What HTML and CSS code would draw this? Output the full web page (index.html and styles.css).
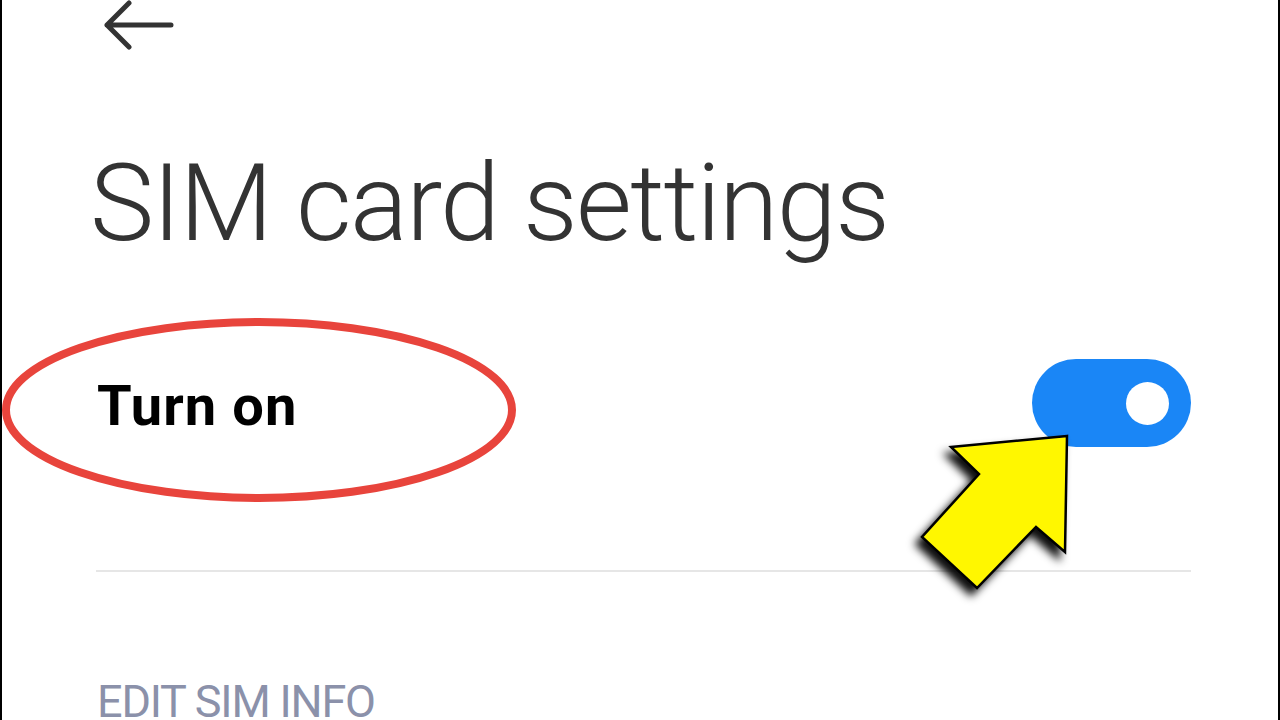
FILE: index.html
```html
<!DOCTYPE html>
<html>
<head>
<meta charset="utf-8">
<link rel="stylesheet" href="styles.css">
</head>
<body>
<div class="screen">
  <div class="page">
    <header class="topbar">
      <svg class="back" width="72" height="50" viewBox="0 0 72 50">
        <path d="M3 25 H67 M3 25 L25 3 M3 25 L25 47" fill="none" stroke="#333" stroke-width="5" stroke-linecap="round" stroke-linejoin="round"/>
      </svg>
    </header>
    <h1 class="title">SIM card settings</h1>
    <div class="row">
      <span class="label">Turn on</span>
      <div class="toggle"><span class="knob"></span></div>
    </div>
    <div class="divider"></div>
    <div class="section">EDIT SIM INFO</div>
  </div>
  <svg class="ring" width="530" height="200" viewBox="0 0 530 200">
    <ellipse cx="259" cy="94" rx="253" ry="88" fill="none" stroke="#e8443c" stroke-width="8"/>
  </svg>
  <svg class="pointer" width="180" height="180" viewBox="900 420 180 180">
    <polygon points="1067,436 951,447 979,474 922,537 977,588 1036,527 1065,552" fill="#fff700" stroke="#000" stroke-width="2.5" stroke-linejoin="miter"/>
  </svg>
</div>
</body>
</html>
```
FILE: styles.css
```css
html, body {
  margin: 0;
  padding: 0;
  background: #fff;
}
.screen {
  position: relative;
  width: 1280px;
  height: 720px;
  box-sizing: border-box;
  border-left: 2px solid #000;
  border-right: 2px solid #000;
  overflow: hidden;
  background: #fff;
  font-family: Roboto, "Liberation Sans", sans-serif;
}
.page {
  padding: 0 87px 0 94px;
  display: flex;
  flex-direction: column;
}
.topbar {
  height: 50px;
  display: flex;
  align-items: center;
}
.back {
  display: block;
  margin-left: 8px;
}
.title {
  margin: 99px 0 0 -6px;
  font-weight: 300;
  font-size: 108px;
  line-height: 108px;
  color: #333;
  letter-spacing: -1.65px;
}
.row {
  margin-top: 102px;
  height: 88px;
  display: flex;
  align-items: center;
  justify-content: space-between;
}
.label {
  font-weight: 700;
  font-size: 56px;
  line-height: 88px;
  padding-top: 6px;
  margin-left: 1px;
  letter-spacing: 1.1px;
  color: #000;
}
.toggle {
  width: 159px;
  height: 88px;
  border-radius: 44px;
  background: #1a86f6;
  display: flex;
  align-items: center;
  justify-content: flex-end;
  padding-right: 22px;
  box-sizing: border-box;
}
.knob {
  width: 43px;
  height: 43px;
  border-radius: 50%;
  background: #fff;
}
.divider {
  margin-top: 123px;
  height: 2px;
  background: #e6e6e6;
}
.section {
  margin-top: 107px;
  margin-left: 1px;
  font-size: 45px;
  line-height: 45px;
  font-weight: 400;
  letter-spacing: -1.2px;
  color: #8b91aa;
}
.ring {
  position: absolute;
  left: -2px;
  top: 316px;
}
.pointer {
  position: absolute;
  left: 898px;
  top: 420px;
  overflow: visible;
  filter: drop-shadow(-6px 7px 4px rgba(0,0,0,0.95));
}
```
